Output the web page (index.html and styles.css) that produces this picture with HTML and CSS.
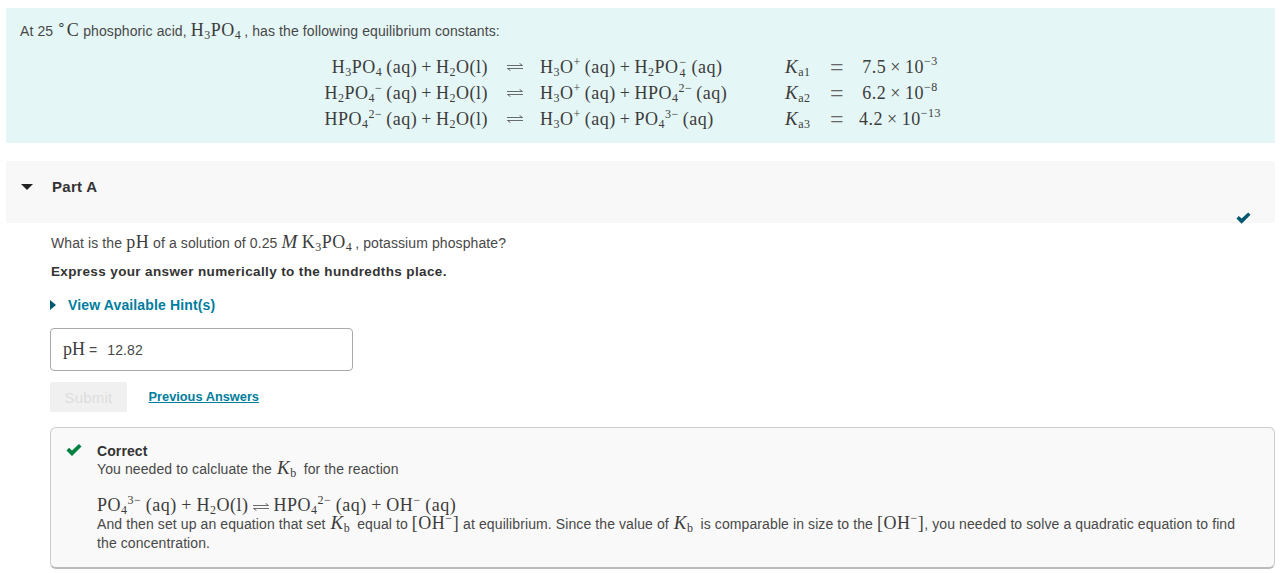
FILE: index.html
```html
<!DOCTYPE html>
<html>
<head>
  <meta charset="utf-8">
  <title>Part A</title>
  <link rel="stylesheet" href="styles.css">
</head>
<body>
  <svg class="defs" width="0" height="0">
    <symbol id="harpoons" viewBox="0 0 16 8">
      <path d="M0 2.5H15.5M15.5 2.5L12.5 .3M16 5.5H.5M.5 5.5L3.5 7.7" fill="none" stroke="currentColor" stroke-width=".8"/>
    </symbol>
    <symbol id="check" viewBox="0 0 16 12">
      <path d="M.5 6.5L3 3.8L6 6.5L13 0L15.5 2.5L6 12Z" fill="currentColor"/>
    </symbol>
  </svg>

  <div class="intro">
    <p class="intro-text">At 25 <span class="m"><sup class="deg">∘</sup>C</span> phosphoric acid, <span class="m formula">H<sub>3</sub>PO<sub>4</sub></span>, has the following equilibrium constants:</p>
    <div class="eq-table m">
      <div class="eq-left">H<sub>3</sub>PO<sub>4</sub> (aq) + H<sub>2</sub>O(l)</div>
      <svg class="harpoon"><use href="#harpoons"/></svg>
      <div>H<sub>3</sub>O<sup>+</sup> (aq) + H<sub>2</sub>PO<span class="stack"><i>−</i><b>4</b></span> (aq)</div>
      <div class="ka"><em>K</em><sub>a1</sub></div>
      <div class="eq-sign">=</div>
      <div class="ka-val">7.5 × 10<sup>−3</sup></div>

      <div class="eq-left">H<sub>2</sub>PO<sub>4</sub><sup>−</sup> (aq) + H<sub>2</sub>O(l)</div>
      <svg class="harpoon"><use href="#harpoons"/></svg>
      <div>H<sub>3</sub>O<sup>+</sup> (aq) + HPO<sub>4</sub><sup>2−</sup> (aq)</div>
      <div class="ka"><em>K</em><sub>a2</sub></div>
      <div class="eq-sign">=</div>
      <div class="ka-val">6.2 × 10<sup>−8</sup></div>

      <div class="eq-left">HPO<sub>4</sub><sup>2−</sup> (aq) + H<sub>2</sub>O(l)</div>
      <svg class="harpoon"><use href="#harpoons"/></svg>
      <div>H<sub>3</sub>O<sup>+</sup> (aq) + PO<sub>4</sub><sup>3−</sup> (aq)</div>
      <div class="ka"><em>K</em><sub>a3</sub></div>
      <div class="eq-sign">=</div>
      <div class="ka-val">4.2 × 10<sup>−13</sup></div>
    </div>
  </div>

  <div class="part-header">
    <span class="caret-down"></span>
    <h2>Part A</h2>
    <svg class="part-check"><use href="#check"/></svg>
  </div>

  <div class="part-body">
    <p class="question">What is the <span class="m">pH</span> of a solution of 0.25 <span class="m formula"><em>M</em> K<sub>3</sub>PO<sub>4</sub></span>, potassium phosphate?</p>
    <p class="instruction">Express your answer numerically to the hundredths place.</p>
    <div class="hints"><span class="caret-right"></span><a>View Available Hint(s)</a></div>

    <div class="answer-box"><span class="m">pH</span><span class="answer-eq">=</span><span class="answer-val">12.82</span></div>

    <div class="actions">
      <button class="btn-submit">Submit</button>
      <a class="prev-link">Previous Answers</a>
    </div>

    <div class="feedback">
      <svg class="feedback-check"><use href="#check"/></svg>
      <div class="feedback-body">
        <div class="feedback-title">Correct</div>
        <p>You needed to calcluate the <span class="m kb"><em>K</em><sub>b</sub></span> for the reaction</p>
        <div class="feedback-eq m">PO<sub>4</sub><sup>3−</sup> (aq) + H<sub>2</sub>O(l) <svg class="harpoon small"><use href="#harpoons"/></svg> HPO<sub>4</sub><sup>2−</sup> (aq) + OH<sup>−</sup> (aq)</div>
        <p>And then set up an equation that set <span class="m kb"><em>K</em><sub>b</sub></span> equal to <span class="m">[OH<sup>−</sup>]</span> at equilibrium. Since the value of <span class="m kb"><em>K</em><sub>b</sub></span> is comparable in size to the <span class="m">[OH<sup>−</sup>]</span>, you needed to solve a quadratic equation to find the concentration.</p>
      </div>
    </div>
  </div>
</body>
</html>
```

FILE: styles.css
```css
body {
  margin: 8px 11px 0 6px;
  font-family: "Liberation Sans", Arial, sans-serif;
  font-size: 14px;
  letter-spacing: .1px;
  color: #484848;
  background-color: white;
}
p {
  margin: 0;
}
.defs {
  position: absolute;
}
.m {
  font-family: "Liberation Serif", serif;
  font-size: 18px;
  letter-spacing: .5px;
  word-spacing: -1px;
  color: #3c3c3c;
}
.m em {
  font-size: 19px;
  font-style: italic;
}
.formula {
  margin-right: 3px;
}
.kb {
  margin: 0 3px 0 1px;
}
sub, sup {
  font-size: 12px;
  line-height: 0;
}
sub {
  vertical-align: -3px;
}
sup {
  vertical-align: 7px;
}
.intro {
  height: 135px;
  background-color: #e5f6f6;
  padding: 12px 14px 0;
  box-sizing: border-box;
}
.intro-text {
  line-height: 20px;
}
.deg {
  font-size: 14px;
}
.eq-table {
  display: grid;
  grid-template-columns: 468px 52px 245px 45px 22px 96px;
  grid-auto-rows: 26px;
  align-items: center;
  margin: 13px 0 0 0;
}
.eq-left {
  text-align: right;
}
.harpoon {
  width: 16px;
  height: 8px;
  margin-left: 19px;
  color: #484848;
}
.harpoon.small {
  margin: 0;
}
.stack {
  display: inline-block;
  position: relative;
  width: 9px;
  height: 10px;
}
.stack i, .stack b {
  position: absolute;
  left: 1px;
  font-size: 12px;
  font-style: normal;
  font-weight: normal;
  line-height: 12px;
}
.stack i {
  top: -7px;
}
.stack b {
  top: 4px;
}
.eq-sign {
  font-size: 24px;
  font-weight: normal;
  color: #666;
  line-height: 26px;
}
.ka-val {
  text-align: center;
}
.ka-val sup {
  vertical-align: 8px;
}
.part-header {
  position: relative;
  display: flex;
  align-items: flex-start;
  height: 62px;
  margin-top: 18px;
  background-color: #f8f8f8;
  box-sizing: border-box;
  padding: 17px 0 0 15px;
}
.part-header h2 {
  margin: 0 0 0 19px;
  font-size: 15px;
  line-height: 18px;
  font-weight: bold;
  letter-spacing: .3px;
  color: #333;
}
.caret-down {
  width: 0;
  height: 0;
  margin-top: 6px;
  border-left: 6px solid transparent;
  border-right: 6px solid transparent;
  border-top: 6px solid #222;
}
.part-check {
  position: absolute;
  right: 24px;
  bottom: -1px;
  width: 15px;
  height: 12px;
  color: #00586f;
}
.part-body {
  padding: 9px 0 0 44px;
}
.question {
  margin-left: 1px;
  line-height: 20px;
}
.instruction {
  margin: 9px 0 0 1px;
  font-size: 13.5px;
  line-height: 20px;
  font-weight: bold;
  letter-spacing: .37px;
  color: #333;
}
.hints {
  display: flex;
  align-items: center;
  margin-top: 13px;
  height: 20px;
}
.hints a {
  margin-left: 12px;
  font-size: 14px;
  font-weight: bold;
  letter-spacing: .14px;
  color: #007d9e;
}
.caret-right {
  width: 0;
  height: 0;
  border-top: 5px solid transparent;
  border-bottom: 5px solid transparent;
  border-left: 6px solid #00586f;
}
.answer-box {
  display: flex;
  align-items: center;
  width: 303px;
  height: 43px;
  margin-top: 13px;
  padding-left: 12px;
  box-sizing: border-box;
  border: 1px solid #aaa;
  border-radius: 4px;
}
.answer-box .m {
  letter-spacing: 0;
}
.answer-eq {
  margin-left: 4px;
}
.answer-val {
  margin-left: 10px;
}
.actions {
  display: flex;
  align-items: center;
  margin-top: 11px;
}
.btn-submit {
  width: 77px;
  height: 30px;
  padding: 0;
  border: none;
  border-radius: 2px;
  background-color: #f0f0f0;
  color: #ddd;
  font-family: inherit;
  font-size: 15px;
  letter-spacing: .2px;
}
.prev-link {
  margin: 0 0 2px 21.5px;
  font-size: 12.8px;
  font-weight: bold;
  letter-spacing: 0;
  color: #007d9e;
  text-decoration: underline;
}
.feedback {
  display: flex;
  height: 142px;
  margin-top: 15px;
  box-sizing: border-box;
  padding: 14px 30px 0 15px;
  background-color: #f9f9f9;
  border: 1px solid #ccc;
  border-bottom: 2px solid #bbb;
  border-radius: 6px;
}
.feedback-check {
  flex: none;
  width: 16px;
  height: 12px;
  margin-top: 2px;
  color: #00803e;
}
.feedback-body {
  margin-left: 15px;
  line-height: 19px;
}
.feedback-body p .m {
  line-height: 14px;
}
.feedback-title {
  font-weight: bold;
  color: #333;
  line-height: 18px;
}
.feedback-eq {
  margin-top: 17px;
  line-height: 19px;
  word-spacing: -.5px;
}
```
